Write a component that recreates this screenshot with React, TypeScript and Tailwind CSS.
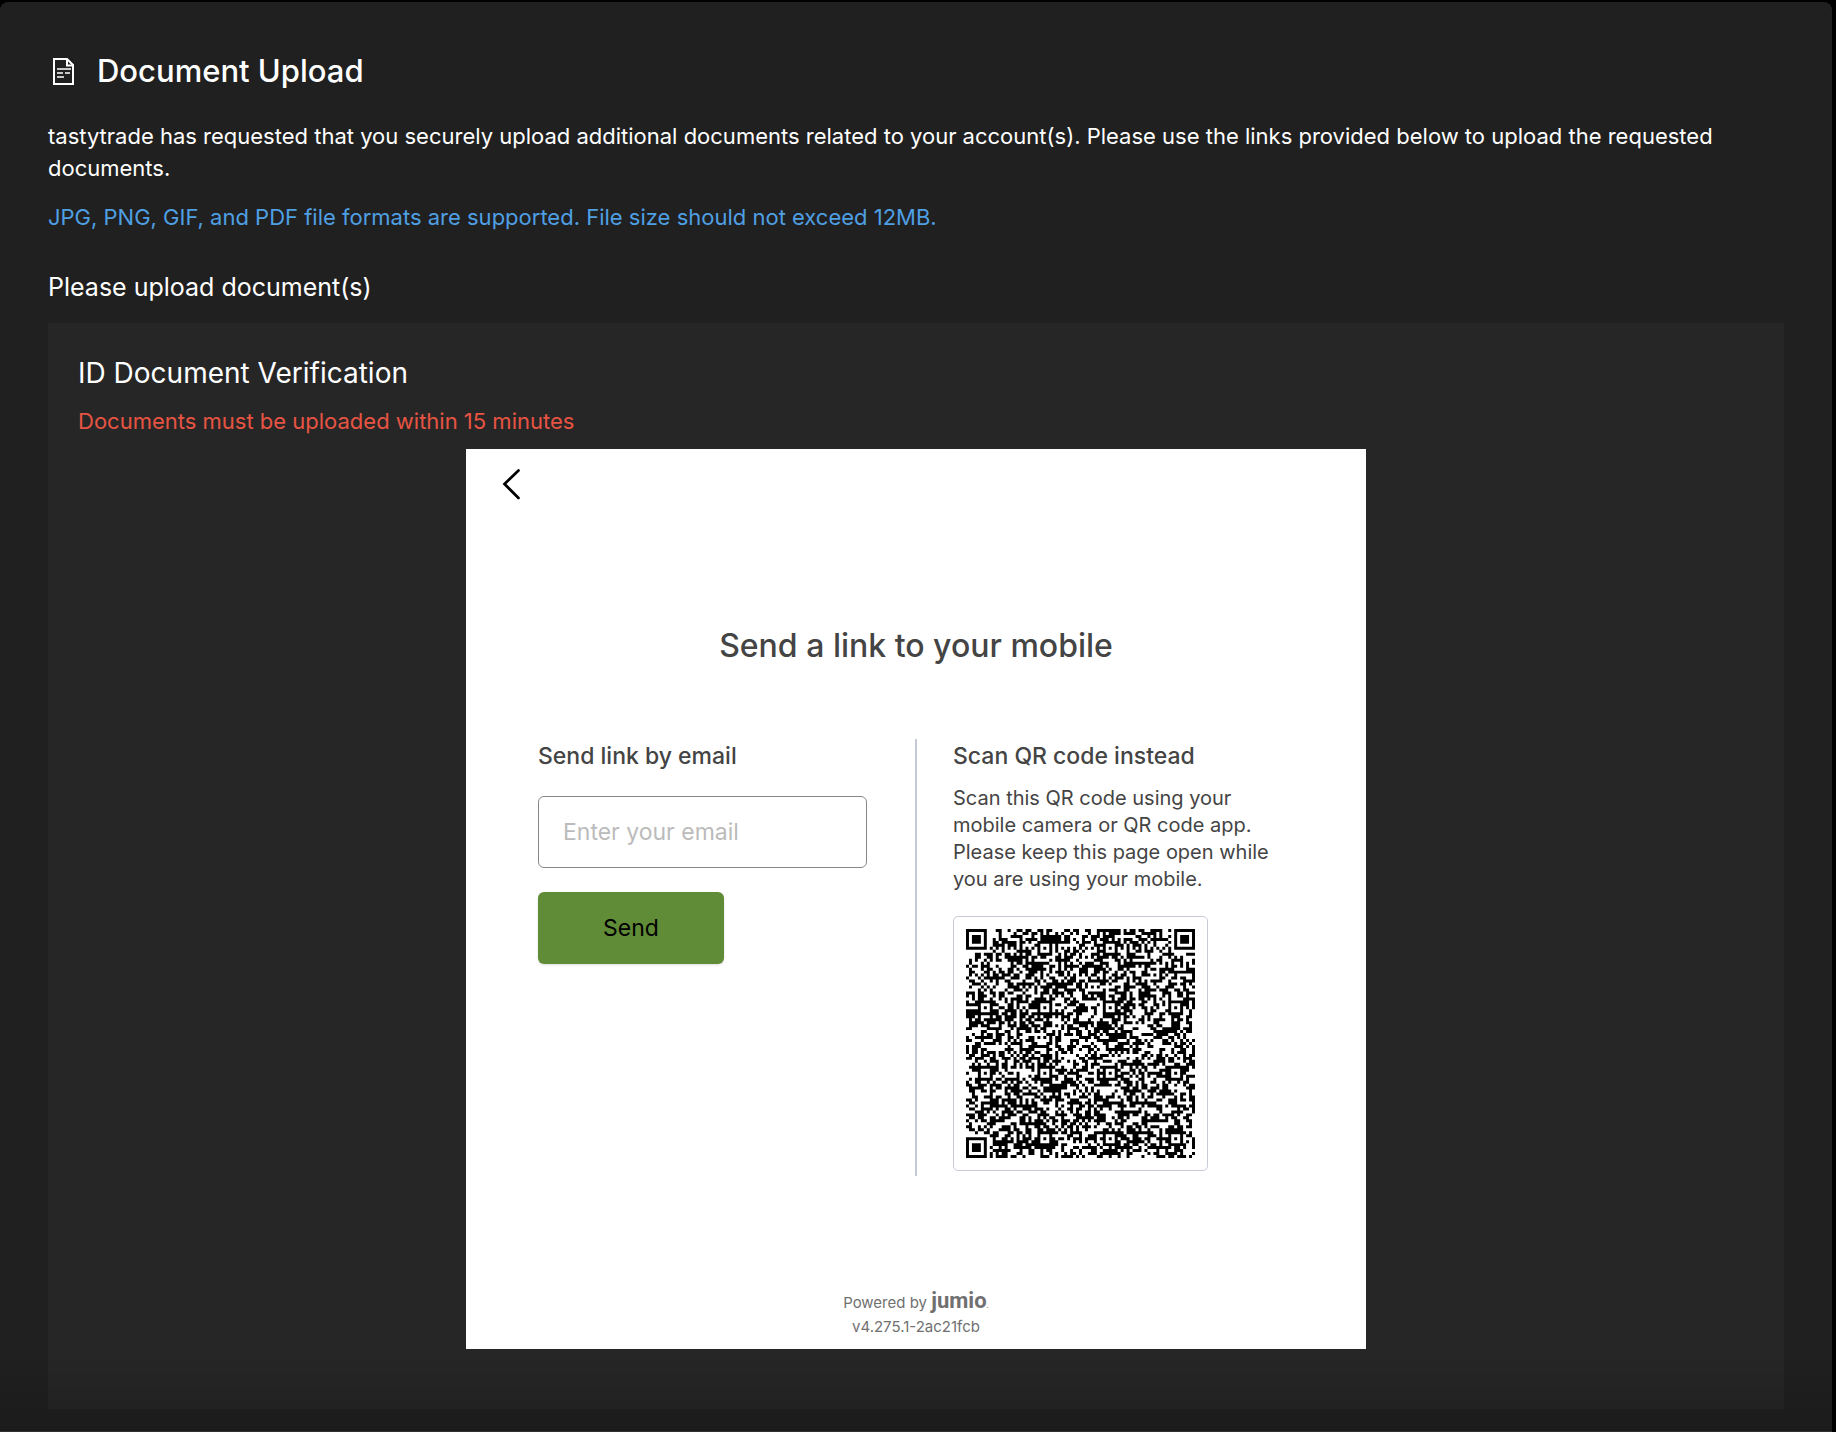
import { useMemo } from "react";

const MODULES = 77;
const ALIGN = [6, 26, 48, 70];

/** Path data for a version 15 QR symbol: function patterns plus a seeded payload. */
function buildQrPath(): string {
  const grid: boolean[][] = [];
  let seed = 91573;
  const next = () => {
    seed = (seed * 1103515245 + 12345) % 2147483648;
    return seed / 2147483648;
  };
  for (let y = 0; y < MODULES; y++) {
    grid.push([]);
    for (let x = 0; x < MODULES; x++) grid[y].push(next() < 0.52);
  }
  for (let i = 8; i < MODULES - 8; i++) {
    grid[6][i] = i % 2 === 0;
    grid[i][6] = i % 2 === 0;
  }
  for (const cy of ALIGN) {
    for (const cx of ALIGN) {
      const corner =
        (cx === 6 && cy === 6) || (cx === 70 && cy === 6) || (cx === 6 && cy === 70);
      if (corner) continue;
      for (let dy = -2; dy <= 2; dy++) {
        for (let dx = -2; dx <= 2; dx++) {
          grid[cy + dy][cx + dx] = Math.max(Math.abs(dx), Math.abs(dy)) !== 1;
        }
      }
    }
  }
  const finders = [
    [3, 3],
    [MODULES - 4, 3],
    [3, MODULES - 4],
  ];
  for (const [cx, cy] of finders) {
    for (let dy = -4; dy <= 4; dy++) {
      for (let dx = -4; dx <= 4; dx++) {
        const x = cx + dx;
        const y = cy + dy;
        if (x < 0 || y < 0 || x >= MODULES || y >= MODULES) continue;
        const ring = Math.max(Math.abs(dx), Math.abs(dy));
        grid[y][x] = ring !== 2 && ring !== 4;
      }
    }
  }
  let path = "";
  for (let y = 0; y < MODULES; y++) {
    let x = 0;
    while (x < MODULES) {
      if (!grid[y][x]) {
        x++;
        continue;
      }
      let end = x;
      while (end < MODULES && grid[y][end]) end++;
      path += `M${x} ${y}h${end - x}v1h-${end - x}z`;
      x = end;
    }
  }
  return path;
}

function QrCode() {
  const path = useMemo(buildQrPath, []);
  return (
    <div className="w-[255px] rounded-[5px] border border-[#c5cad6] p-3">
      <svg viewBox="0 0 77 77" role="img" aria-label="QR code" className="block h-auto w-full">
        <path d={path} fill="#000" />
      </svg>
    </div>
  );
}

function DocumentIcon() {
  return (
    <svg width="21" height="27" viewBox="0 0 21 27" fill="none" stroke="#fff" aria-hidden="true">
      <path d="M1 1h13l6 6v19H1z" strokeWidth="2" />
      <path d="M14 1v6.500h6" strokeWidth="2" />
      <path d="M4 11h14M4 15h6M12 15h5M4 19h7" strokeWidth="1.500" />
    </svg>
  );
}

function VerificationWidget() {
  return (
    <div className="mx-auto flex min-h-[900px] w-full max-w-[900px] flex-col bg-white font-[Inter,sans-serif] text-[#444]">
      <div className="px-[34px] pt-[17px]">
        <button type="button" aria-label="Back" className="flex size-9 items-center justify-start">
          <svg width="22" height="32" viewBox="0 0 22 32" fill="none" aria-hidden="true">
            <path d="M18.500 2.500 4.500 16 18.500 30" stroke="#000" strokeWidth="2.700" strokeLinecap="round" />
          </svg>
        </button>
      </div>
      <h3 className="mt-[120px] text-center text-[32px] leading-[48px] font-medium">
        Send a link to your mobile
      </h3>
      <div className="mt-[69px] grid grid-cols-2 pr-[74px] pl-[72px]">
        <form className="pr-12" onSubmit={(e) => e.preventDefault()}>
          <label htmlFor="email" className="block text-[23px] leading-[34px] font-medium">
            Send link by email
          </label>
          <input
            id="email"
            type="email"
            placeholder="Enter your email"
            className="mt-[23px] block h-[72px] w-full rounded-md border border-[#888] px-6 text-[23px] placeholder:text-[#bbb]"
          />
          <button
            type="submit"
            className="mt-6 block h-[72px] w-[186px] rounded-md bg-[#608c38] text-[23px] text-black shadow-sm"
          >
            Send
          </button>
        </form>
        <section className="border-l-2 border-[#c5cad6] pb-[5px] pl-9">
          <h4 className="text-[23px] leading-[34px] font-medium">Scan QR code instead</h4>
          <p className="mt-3 mb-[23px] text-xl leading-[27px]">
            Scan this QR code using your mobile camera or QR code app. Please keep this page open
            while you are using your mobile.
          </p>
          <QrCode />
        </section>
      </div>
      <footer className="mt-auto pb-2.5 text-center text-[15px] leading-6 text-[#707070]">
        <p>
          Powered by{" "}
          <span className="font-[Roboto,sans-serif] text-[22px] leading-none font-bold">jumio</span>
          <span className="text-[8px] leading-none">.</span>
        </p>
        <p>v4.275.1-2ac21fcb</p>
      </footer>
    </div>
  );
}

export default function App() {
  return (
    <div className="min-h-screen bg-black pt-0.5 pr-1">
      <main className="relative rounded-t-lg border-b border-[#303030] bg-[#202020] px-12 pt-12 pb-[22px] font-[Inter,sans-serif] text-white">
        <header className="flex items-center gap-[23px] pl-[5px]">
          <DocumentIcon />
          <h1 className="text-[31px] leading-[42px] font-medium">Document Upload</h1>
        </header>
        <p className="mt-7 text-[22px] leading-8">
          tastytrade has requested that you securely upload additional documents related to your
          account(s). Please use the links provided below to upload the requested documents.
        </p>
        <p className="mt-[17px] text-[22px] leading-8 text-[#4f9fe3]">
          JPG, PNG, GIF, and PDF file formats are supported. File size should not exceed 12MB.
        </p>
        <p className="mt-9 text-[25px] leading-9">Please upload document(s)</p>
        <section className="mt-[18px] bg-[#262626] px-[30px] pt-8 pb-[60px]">
          <h2 className="text-[28px] leading-9">ID Document Verification</h2>
          <p className="mt-3.5 mb-3 text-[22px] leading-8 text-[#e75443]">
            Documents must be uploaded within 15 minutes
          </p>
          <VerificationWidget />
        </section>
        <div className="pointer-events-none absolute inset-x-0 bottom-0 h-20 bg-linear-to-b from-black/0 to-black/15" />
      </main>
    </div>
  );
}
